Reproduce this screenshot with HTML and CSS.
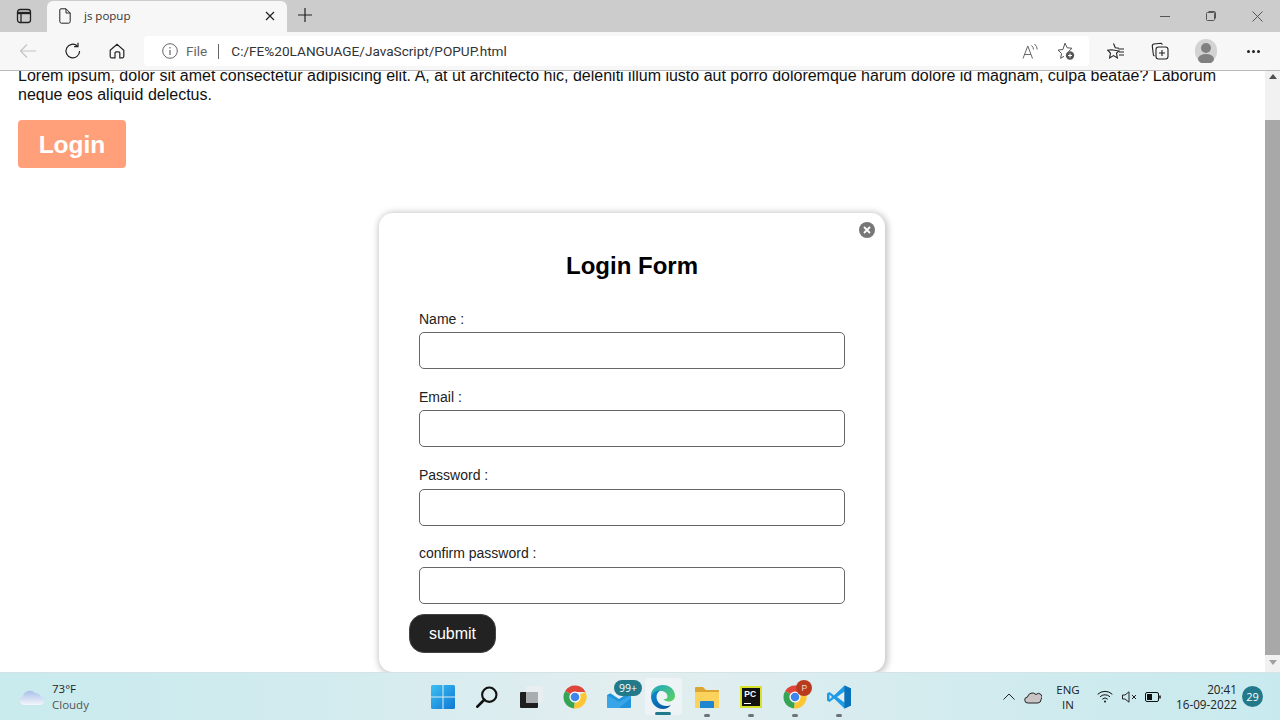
FILE: index.html
```html
<!DOCTYPE html>
<html lang="en">
<head>
    <meta charset="UTF-8">
    <title>js popup</title>
    <link rel="stylesheet" href="styles.css">
</head>
<body>
    <!-- Tab strip -->
    <div class="tabstrip">
        <div class="tab-actions">
            <svg width="16" height="16" viewBox="0 0 16 16" fill="none" stroke="#222" stroke-width="1.3"><rect x="1.5" y="1.5" width="13" height="13" rx="2.5"/><path d="M1.5 5h13" stroke-width="2.4"/><path d="M5 5v9" /></svg>
        </div>
        <div class="tab">
            <svg width="12" height="16" viewBox="0 0 12 16" fill="none" stroke="#222" stroke-width="1"><path d="M2 .8h5l4.2 4.2v8.4a1.8 1.8 0 0 1-1.8 1.8H2.6A1.8 1.8 0 0 1 .8 13.4V2A1.2 1.2 0 0 1 2 .8zM7 .8V5h4.2"/></svg>
            <span class="tab-title">js popup</span>
            <svg class="tab-close" width="10" height="10" viewBox="0 0 10 10" stroke="#222" stroke-width="1.2"><path d="M1 1l8 8M9 1l-8 8"/></svg>
        </div>
        <svg class="new-tab" width="16" height="16" viewBox="0 0 16 16" stroke="#222" stroke-width="1.2"><path d="M8 1v14M1 8h14"/></svg>
        <div class="window-controls">
            <svg width="10" height="10" viewBox="0 0 10 10" stroke="#555"><path d="M0 5.5h10"/></svg>
            <svg width="10" height="10" viewBox="0 0 10 10" fill="none" stroke="#555"><rect x=".5" y="1.5" width="8" height="8" rx="1"/><path d="M2.5 .5h5.5a1.5 1.5 0 0 1 1.5 1.5v5.5"/></svg>
            <svg width="11" height="11" viewBox="0 0 11 11" stroke="#555"><path d="M.5.5l10 10M10.5.5l-10 10"/></svg>
        </div>
    </div>

    <!-- Toolbar -->
    <div class="toolbar">
        <div class="nav-buttons">
            <svg width="18" height="16" viewBox="0 0 18 16" fill="none" stroke="#c4c4c4" stroke-width="1.2"><path d="M17 8H1.5M8 1.5L1.5 8 8 14.5"/></svg>
            <svg width="18" height="18" viewBox="0 0 18 18" fill="none" stroke="#222" stroke-width="1.2"><path d="M15.6 9a6.8 6.8 0 1 1-2.2-5"/><path d="M14 .8v3.9h-3.9"/></svg>
            <svg width="16" height="16" viewBox="0 0 16 16" fill="none" stroke="#222" stroke-width="1.2"><path d="M1.2 7.2L8 1.2l6.8 6v6.4a1.2 1.2 0 0 1-1.2 1.2h-2.8V10a1.2 1.2 0 0 0-1.2-1.2H7.2A1.2 1.2 0 0 0 6 10v4.8H2.4a1.2 1.2 0 0 1-1.2-1.2z"/></svg>
        </div>
        <div class="addressbar">
            <svg width="16" height="16" viewBox="0 0 16 16" fill="none" stroke="#666"><circle cx="8" cy="8" r="7.3"/><path d="M8 7v5M8 4v1.4" stroke-width="1.2"/></svg>
            <span class="addr-file">File</span>
            <span class="addr-sep"></span>
            <span class="addr-url">C:/FE%20LANGUAGE/JavaScript/POPUP.html</span>
            <span class="addr-icons">
                <svg width="17" height="17" viewBox="0 0 17 17" fill="none" stroke="#666"><path d="M1 15.500L5.800 3l4.700 12.500M2.800 11.500h6"/><path d="M9.500 2.500a5 5 0 0 1 2 4M12.500 1a7 7 0 0 1 2.700 5.500"/></svg>
                <svg width="18" height="18" viewBox="0 0 18 18" fill="none" stroke="#555"><path d="M8 1.200l2.100 4.500 4.900.6-3.600 3.300M7 14.300l-3.400 2 1-4.800L1 8.100l4.900-.6L8 1.200"/><circle cx="13" cy="13.500" r="4.200" fill="#555" stroke="none"/><path d="M13 11.500v4M11 13.500h4" stroke="#fff"/></svg>
            </span>
        </div>
        <div class="toolbar-icons">
            <svg width="18" height="18" viewBox="0 0 18 18" fill="none" stroke="#222" stroke-width="1.1"><path d="M6.500 1.500l1.800 4.300 3.700.4M12 9l-2.500 2.200.9 4.800-3.900-2.400L2.600 16l.9-4.800L.8 8.200l3.900-.5z"/><path d="M11.500 7h5.500M12 10h5M12 13h5"/></svg>
            <svg width="18" height="18" viewBox="0 0 18 18" fill="none" stroke="#222" stroke-width="1.1"><rect x="5" y="5" width="12" height="12" rx="2.500"/><path d="M11 8v6M8 11h6"/><path d="M11.500 2.500L10 1.200 3 2A2 2 0 0 0 1.300 4.200l1 8A2 2 0 0 0 3.500 14"/></svg>
            <svg class="avatar" width="22" height="24" viewBox="0 0 22 24"><rect width="22" height="24" rx="11" fill="#d3d3d3"/><circle cx="11" cy="9" r="5" fill="#808080"/><ellipse cx="11" cy="20" rx="8" ry="5" fill="#808080"/></svg>
            <span class="dots"><i></i><i></i><i></i></span>
        </div>
    </div>

    <!-- Page -->
    <div class="viewport">
        <div class="page">
            <p class="lorem">Lorem ipsum, dolor sit amet consectetur adipisicing elit. A, at ut architecto hic, deleniti illum iusto aut porro doloremque harum dolore id magnam, culpa beatae? Laborum neque eos aliquid delectus.</p>
            <button class="login-btn">Login</button>

            <div class="popup">
                <span class="popup-close">
                    <svg width="8" height="8" viewBox="0 0 8 8" stroke="#fff" stroke-width="1.800"><path d="M1 1l6 6M7 1L1 7"/></svg>
                </span>
                <h2>Login Form</h2>
                <div class="form-group">
                    <label>Name :</label>
                    <input type="text">
                </div>
                <div class="form-group">
                    <label>Email :</label>
                    <input type="text">
                </div>
                <div class="form-group">
                    <label>Password :</label>
                    <input type="text">
                </div>
                <div class="form-group">
                    <label>confirm password :</label>
                    <input type="text">
                </div>
                <button class="submit-btn">submit</button>
            </div>
        </div>
        <div class="scrollbar">
            <span class="arrow-up"></span>
            <div class="thumb"></div>
            <span class="arrow-down"></span>
        </div>
    </div>

    <!-- Taskbar -->
    <div class="taskbar">
        <div class="weather">
            <svg width="26" height="18" viewBox="0 0 26 18"><defs><linearGradient id="cloud" x1="0" y1="0" x2="0" y2="1"><stop offset="0" stop-color="#a9bfea"/><stop offset="1" stop-color="#f4f6fa"/></linearGradient></defs><path d="M5 17a4.500 4.500 0 0 1-1-8.800A7 7 0 0 1 16 5a5.500 5.500 0 0 1 5.500 3.500A4.300 4.300 0 0 1 21.500 17z" fill="url(#cloud)"/></svg>
            <div class="weather-text">
                <span>73°F</span>
                <span class="weather-sub">Cloudy</span>
            </div>
        </div>

        <div class="task-icons">
            <div class="task-icon">
                <svg width="24" height="24" viewBox="0 0 24 24"><defs><linearGradient id="win" x1="0" y1="0" x2="1" y2="1"><stop offset="0" stop-color="#3cc0f2"/><stop offset="1" stop-color="#0f78d4"/></linearGradient></defs><path d="M0 1.500A1.500 1.500 0 0 1 1.500 0h10v11.500H0zM12.500 0h10A1.500 1.500 0 0 1 24 1.500v10H12.500zM0 12.500h11.500V24h-10A1.500 1.500 0 0 1 0 22.500zM12.500 12.500H24v10a1.500 1.500 0 0 1-1.500 1.500h-10z" fill="url(#win)"/></svg>
            </div>
            <div class="task-icon">
                <svg width="22" height="22" viewBox="0 0 24 24" fill="none" stroke="#111"><circle cx="14.500" cy="9.500" r="7.800" stroke-width="2.300"/><path d="M9 15l-7.500 7.500" stroke-width="3" stroke-linecap="round"/></svg>
            </div>
            <div class="task-icon">
                <svg width="24" height="24" viewBox="0 0 24 24"><rect x="7" y="1" width="17" height="17" rx="1.500" fill="#e9eef0"/><rect x="1" y="7" width="18" height="16" rx="1" fill="#1e1e1e"/><rect x="7" y="7" width="12" height="11" fill="#a9adaf"/></svg>
            </div>
            <div class="task-icon">
                <svg width="24" height="24" viewBox="0 0 24 24"><use href="#chrome-logo"/></svg>
            </div>
            <div class="task-icon">
                <svg width="26" height="24" viewBox="0 0 26 24"><path d="M1 10L13 4l12 6v12a1 1 0 0 1-1 1H2a1 1 0 0 1-1-1z" fill="#1f93dc"/><path d="M1 10l12 7 12-7v3L13 23H1z" fill="#4cb5ee" opacity=".55"/><path d="M4 8l9-4 9 4-9 6z" fill="#e6f2f8"/></svg>
                <span class="count-pill">99+</span>
            </div>
            <div class="task-icon is-active">
                <svg width="26" height="26" viewBox="0 0 26 26"><defs><linearGradient id="edgeb" x1="0" y1="0" x2="1" y2="1"><stop offset="0" stop-color="#0c8fd0"/><stop offset="1" stop-color="#0a4f9a"/></linearGradient><linearGradient id="edgeg" x1="0" y1="0" x2="1" y2="1"><stop offset="0" stop-color="#1fa6c9"/><stop offset="1" stop-color="#5fd35a"/></linearGradient></defs><path d="M1 12C1 5 6.500 1 13 1c6.500 0 12 4.500 12 11 0 3.500-3 5.500-6.500 5.500-2.500 0-4.500-1-5-2.500 2 .5 4-.5 4-2.500C17.500 9.500 15 7 11 7c-5 0-9 2-10 5z" fill="url(#edgeg)"/><path d="M1 12c1-3.500 5-5.500 9-5.500-2.500 2-3.500 4-3.500 6.500 0 5 4.500 9 9.500 9 2 0 4-.5 5-1.500C19 24 16 25 13 25 6 25 1 19.500 1 12z" fill="url(#edgeb)"/></svg>
                <span class="run-dot is-long"></span>
            </div>
            <div class="task-icon">
                <svg width="26" height="24" viewBox="0 0 26 24"><path d="M1 3a1 1 0 0 1 1-1h7l3 3h12a1 1 0 0 1 1 1v3H1z" fill="#dca632"/><path d="M1 7h24v15a1 1 0 0 1-1 1H2a1 1 0 0 1-1-1z" fill="#fbd25c"/><path d="M7 16h12a1 1 0 0 1 1 1v6H6v-6a1 1 0 0 1 1-1z" fill="#1f86d0"/></svg>
                <span class="run-dot"></span>
            </div>
            <div class="task-icon">
                <div class="pycharm"><span>PC</span><i></i></div>
                <span class="run-dot"></span>
            </div>
            <div class="task-icon">
                <svg width="24" height="24" viewBox="0 0 24 24"><use href="#chrome-logo"/></svg>
                <span class="profile-badge">P</span>
                <span class="run-dot"></span>
            </div>
            <div class="task-icon">
                <svg width="24" height="24" viewBox="0 0 24 24"><path d="M17.500 0.500L24 3.500v17l-6.500 3L7 13.500 2.500 17 0 15.500V8.500L2.500 7 7 10.500z" fill="#1d9be6"/><path d="M17.500 6.500L10 12l7.500 5.500z" fill="#e2eef0"/><path d="M2.500 9.500L5 12l-2.500 2.500z" fill="#e2eef0"/><path d="M17.500 .5L24 3.500v17l-6.500 3z" fill="#0a70b8"/></svg>
                <span class="run-dot"></span>
            </div>
        </div>

        <div class="tray">
            <svg width="12" height="7" viewBox="0 0 12 7" fill="none" stroke="#222"><path d="M.5 6.500L6 1l5.500 5.500"/></svg>
            <svg class="tray-cloud" width="18" height="14" viewBox="0 0 18 14"><path d="M4 13a3 3 0 0 1-.5-6A5 5 0 0 1 12 4.500 3.500 3.500 0 0 1 17 9.500 3.500 3.500 0 0 1 14 13z" fill="#c9c5c5" stroke="#222"/></svg>
            <div class="lang"><span>ENG</span><span>IN</span></div>
            <svg class="tray-wifi" width="16" height="13" viewBox="0 0 16 13" fill="none" stroke="#111"><path d="M.7 4.300a10.500 10.500 0 0 1 14.600 0M3 6.800a7.200 7.200 0 0 1 10 0M5.300 9.200a3.900 3.900 0 0 1 5.400 0"/><circle cx="8" cy="11.500" r="1" fill="#111" stroke="none"/></svg>
            <svg class="tray-speaker" width="15" height="12" viewBox="0 0 15 12" fill="none" stroke="#222"><path d="M.5 4h2.500L7 .8v10.400L3 8H.5z"/><path d="M10 4l4 4M14 4l-4 4"/></svg>
            <svg width="16" height="10" viewBox="0 0 16 10" fill="none" stroke="#111"><rect x=".5" y=".5" width="13" height="9" rx="1.500"/><rect x="2" y="2" width="5" height="6" fill="#111" stroke="none"/><path d="M15 3.500v3" stroke-width="1.500"/></svg>
            <div class="clock"><span>20:41</span><span>16-09-2022</span></div>
            <span class="notif">29</span>
        </div>
    </div>

    <svg class="defs-only" width="0" height="0">
        <symbol id="chrome-logo" viewBox="0 0 24 24">
            <path d="M12 12L2.200 6A11.500 11.500 0 0 1 22.400 7H12z" fill="#e0453a"/>
            <path d="M12 12l10.400-5A11.500 11.500 0 0 1 11 23.500z" fill="#fbc631"/>
            <path d="M12 12L11 23.500A11.500 11.500 0 0 1 2.200 6z" fill="#35a555"/>
            <circle cx="12" cy="12" r="5.600" fill="#fff"/>
            <circle cx="12" cy="12" r="4.300" fill="#3f86ec"/>
        </symbol>
    </svg>
</body>
</html>
```

FILE: styles.css
```css
/* General Page Styling */
* {
    box-sizing: border-box;
}

body {
    font-family: 'Liberation Sans', Arial, sans-serif;
    margin: 0;
    width: 1280px;
    height: 720px;
    overflow: hidden;
    display: flex;
    flex-direction: column;
    background-color: #fff;
}

.defs-only {
    position: absolute;
}

/* Tab strip */
.tabstrip {
    height: 32px;
    flex: none;
    background-color: #cccccc;
    display: flex;
    align-items: flex-end;
}

.tab-actions {
    width: 47px;
    height: 32px;
    display: flex;
    align-items: center;
    padding-left: 16px;
}

.tab {
    width: 240px;
    height: 31px;
    background-color: #f7f7f7;
    border-radius: 6px 6px 0 0;
    display: flex;
    align-items: center;
    padding: 0 12px 2px;
}

.tab-title {
    font-family: 'Open Sans', sans-serif;
    font-size: 11.5px;
    color: #333;
    margin-left: 13px;
    flex: 1;
}

.new-tab {
    margin: 0 0 9px 10px;
}

.window-controls {
    margin-left: auto;
    height: 32px;
    display: flex;
    align-items: center;
    gap: 36px;
    padding: 0 17px 0 0;
}

/* Toolbar */
.toolbar {
    height: 39px;
    flex: none;
    background-color: #f7f7f7;
    border-bottom: 1px solid #b9b9b9;
    display: flex;
    align-items: flex-start;
    padding-top: 4px;
}

.nav-buttons {
    width: 144px;
    height: 30px;
    display: flex;
    align-items: center;
    gap: 27px;
    padding-left: 19px;
}

.addressbar {
    width: 945px;
    height: 30px;
    background-color: #fff;
    border-radius: 4px;
    display: flex;
    align-items: center;
    padding-left: 18px;
}

.addr-file {
    font-family: Roboto, sans-serif;
    font-size: 13.600px;
    color: #666;
    margin-left: 8px;
}

.addr-sep {
    width: 1px;
    height: 15px;
    background-color: #666;
    margin: 0 12px 0 11px;
}

.addr-url {
    font-family: Roboto, sans-serif;
    font-size: 13.600px;
    color: #333;
}

.addr-icons {
    margin-left: auto;
    display: flex;
    align-items: center;
    gap: 18px;
    padding-right: 14px;
}

.toolbar-icons {
    flex: 1;
    height: 30px;
    display: flex;
    align-items: center;
    padding-left: 18px;
}

.toolbar-icons svg {
    margin-right: 26px;
}

.toolbar-icons .avatar {
    margin-right: 30px;
}

.dots {
    display: flex;
    gap: 2px;
}

.dots i {
    width: 3px;
    height: 3px;
    background-color: #222;
    border-radius: 50%;
}

/* Page area */
.viewport {
    flex: 1;
    min-height: 0;
    display: flex;
    overflow: hidden;
    position: relative;
}

.page {
    flex: 1;
    position: relative;
    padding: 0 18px;
    overflow: hidden;
}

.lorem {
    margin: -5px 0 0;
    font-size: 16px;
    line-height: 19px;
    color: #111;
}

.login-btn {
    display: block;
    margin-top: 16px;
    width: 108px;
    height: 48px;
    padding-top: 2px;
    border: none;
    border-radius: 4px;
    background-color: #ffa07a;
    color: #fff;
    font-family: inherit;
    font-size: 24.500px;
    font-weight: bold;
}

/* Popup */
.popup {
    position: absolute;
    top: 142px;
    left: 379px;
    width: 506px;
    height: 459px;
    background-color: #fff;
    border-radius: 14px;
    box-shadow: 1px 1px 6px 2px rgba(0, 0, 0, 0.22);
    padding: 38px 40px 0 30px;
}

.popup-close {
    position: absolute;
    top: 9px;
    right: 10px;
    width: 16px;
    height: 16px;
    border-radius: 50%;
    background-color: #777;
    display: flex;
    align-items: center;
    justify-content: center;
}

.popup h2 {
    margin: 0 0 29.500px 0;
    padding-left: 10px;
    text-align: center;
    font-size: 24px;
    line-height: 30px;
    color: #000;
}

.form-group {
    margin: 0 0 19.830px 10px;
}

.form-group label {
    display: block;
    font-size: 14px;
    line-height: 16px;
    color: #222;
    margin-bottom: 5.500px;
}

.form-group input {
    display: block;
    width: 100%;
    height: 37px;
    border: 1px solid #666;
    border-radius: 5px;
    background-color: #fff;
}

.submit-btn {
    display: block;
    margin-top: -9.830px;
    width: 87px;
    height: 39px;
    padding-top: 2px;
    border: 1px solid #444;
    border-radius: 15px;
    background-color: #222;
    color: #fff;
    font-family: inherit;
    font-size: 16px;
}

/* Scrollbar */
.scrollbar {
    width: 15px;
    flex: none;
    background-color: #f1f1f1;
    display: flex;
    flex-direction: column;
    align-items: center;
    padding-top: 3px;
}

.arrow-up {
    border: 4px solid transparent;
    border-top: none;
    border-bottom: 5px solid #505050;
}

.thumb {
    width: 15px;
    height: 535px;
    margin-top: 41px;
    background-color: #a8a8a8;
}

.arrow-down {
    margin-top: 5px;
    border: 4px solid transparent;
    border-bottom: none;
    border-top: 5px solid #a0a0a0;
}

/* Taskbar */
.taskbar {
    height: 48px;
    flex: none;
    background: linear-gradient(90deg, #c9ebee 0%, #d2ebee 25%, #e3eef0 50%, #d2ebee 75%, #c8eaee 100%);
    border-top: 1px solid #d5e3e6;
    display: grid;
    grid-template-columns: 1fr auto 1fr;
    align-items: center;
    position: relative;
    z-index: 2;
}

.weather {
    display: flex;
    align-items: center;
    padding-left: 19px;
    gap: 7px;
}

.weather-text {
    display: flex;
    flex-direction: column;
    font-family: 'Open Sans', sans-serif;
    font-size: 11.500px;
    line-height: 16px;
    color: #222;
}

.weather-sub {
    color: #555;
}

.task-icons {
    display: flex;
    height: 47px;
    padding-left: 2px;
}

.task-icon {
    width: 44.100px;
    height: 39px;
    margin-top: 4px;
    position: relative;
    display: flex;
    align-items: center;
    justify-content: center;
    border-radius: 4px;
}

.task-icon.is-active {
    width: 37px;
    height: 37px;
    margin: 5px 3.550px 0;
    background-color: #eef4f5;
}

.count-pill {
    position: absolute;
    top: 3px;
    left: 17px;
    width: 28px;
    height: 16px;
    border-radius: 8px;
    background-color: #22798a;
    color: #fff;
    font-family: 'Open Sans', sans-serif;
    font-size: 10.500px;
    line-height: 16px;
    text-align: center;
    z-index: 1;
}

.run-dot {
    position: absolute;
    bottom: -1px;
    left: 50%;
    width: 6px;
    height: 3px;
    margin-left: -3px;
    border-radius: 2px;
    background-color: #6b7375;
}

.run-dot.is-long {
    width: 16px;
    margin-left: -8px;
    bottom: 0;
    background-color: #22798a;
}

.pycharm {
    width: 22px;
    height: 22px;
    background-color: #111;
    border: 2px solid #d8e22c;
    color: #fff;
    font-size: 8.500px;
    font-weight: bold;
    line-height: 10px;
    padding: 1px 0 0 2px;
    position: relative;
}

.pycharm span {
    display: block;
}

.pycharm i {
    position: absolute;
    left: 2px;
    bottom: 2px;
    width: 7px;
    height: 1px;
    background-color: #fff;
}

.profile-badge {
    position: absolute;
    top: 3px;
    left: 23px;
    width: 16px;
    height: 16px;
    border-radius: 50%;
    background-color: #b93a1c;
    color: #f5d8cf;
    font-size: 8.500px;
    line-height: 16px;
    text-align: center;
}

.tray {
    display: flex;
    align-items: center;
    justify-content: flex-end;
    color: #222;
    font-family: 'Open Sans', sans-serif;
    font-size: 11.500px;
    line-height: 15px;
    padding-right: 17px;
}

.tray-cloud {
    margin-left: 9px;
}

.lang {
    display: flex;
    flex-direction: column;
    align-items: center;
    width: 26px;
    margin: 0 16px 0 13px;
}

.tray-wifi {
    margin-right: 9px;
}

.tray-speaker {
    margin-right: 8px;
}

.clock {
    display: flex;
    flex-direction: column;
    align-items: flex-end;
    font-size: 11.700px;
    margin: 0 5px 0 15px;
}

.notif {
    width: 21px;
    height: 21px;
    border-radius: 50%;
    background-color: #22798a;
    color: #fff;
    font-size: 11px;
    line-height: 21px;
    text-align: center;
}
```
